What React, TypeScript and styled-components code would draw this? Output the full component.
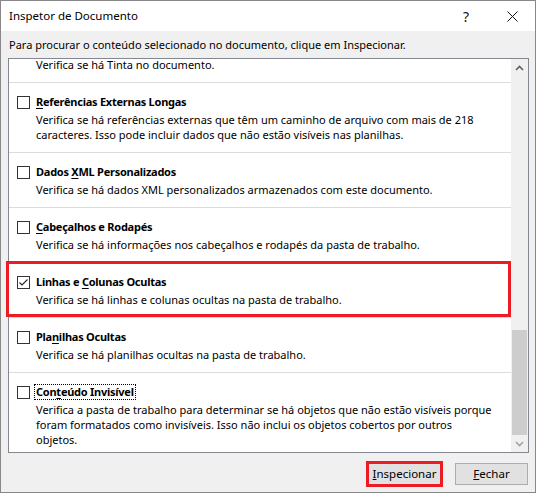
import React from 'react';
import styled, { createGlobalStyle } from 'styled-components';

const GlobalStyle = createGlobalStyle`
  html, body { margin: 0; padding: 0; background: #ffffff; }
  body {
    font-family: "Noto Sans", sans-serif;
    font-size: 11px;
    color: #000;
  }
  * { box-sizing: border-box; }
`;

const ANNOT = '#ed1c24';

const Window = styled.div`
  width: 536px;
  height: 493px;
  border: 1px solid #888888;
  background: #f0f0f0;
  display: flex;
  flex-direction: column;
`;

const TitleBar = styled.div`
  height: 30px;
  background: #ffffff;
  display: flex;
  align-items: center;
  padding-left: 8px;
  flex-shrink: 0;
`;

const Title = styled.div`
  flex: 1;
  line-height: 16px;
  font-size: 11.5px;
`;

const CaptionButton = styled.div`
  width: 46px;
  height: 30px;
  display: flex;
  align-items: center;
  justify-content: center;
  font-size: 14px;
  color: #111;
`;

const Body = styled.div`
  flex: 1;
  display: flex;
  flex-direction: column;
  padding: 6px 6px 0 7px;
`;

const Instruction = styled.div`
  line-height: 16px;
  padding-left: 1px;
  white-space: nowrap;
`;

const ListFrame = styled.div`
  margin-top: 5px;
  height: 395px;
  border: 1px solid #828790;
  background: #ffffff;
  display: flex;
  flex-shrink: 0;
`;

const Viewport = styled.div`
  flex: 1;
  min-width: 0;
  display: flex;
  flex-direction: column;
  overflow-x: visible;
  overflow-y: clip;
`;

const Item = styled.div<{ $first?: boolean; $marked?: boolean }>`
  position: relative;
  flex-shrink: 0;
  padding: 11px 0 10px 8px;
  border-top: ${p => (p.$first ? 'none' : '1px solid #dcdcdc')};
  margin-top: ${p => (p.$first ? '-31px' : '0')};
  ${p =>
    p.$marked &&
    `
    &::after {
      content: '';
      position: absolute;
      top: -2px;
      left: -3px;
      right: 0;
      bottom: 0;
      border: 3px solid ${ANNOT};
      pointer-events: none;
    }
  `}
`;

const Head = styled.div`
  display: flex;
  align-items: center;
  gap: 6px;
  height: 16px;
`;

const Box = styled.div`
  width: 13px;
  height: 13px;
  border: 1px solid #333333;
  background: #ffffff;
  display: flex;
  align-items: center;
  justify-content: center;
  flex-shrink: 0;
`;

const ItemTitle = styled.span<{ $focus?: boolean }>`
  font-weight: 700;
  line-height: 14px;
  letter-spacing: -0.25px;
  white-space: nowrap;
  outline: ${p => (p.$focus ? '1px dotted #000' : 'none')};
  padding: 0 1px;
  margin-left: -1px;
  u { text-underline-offset: 2px; }
`;

const Desc = styled.div`
  margin-top: 2px;
  padding-left: 19px;
  line-height: 15px;
  white-space: nowrap;
`;

const ScrollBar = styled.div`
  width: 17px;
  background: #f0f0f0;
  display: flex;
  flex-direction: column;
  flex-shrink: 0;
`;

const ArrowBtn = styled.div`
  height: 17px;
  display: flex;
  align-items: center;
  justify-content: center;
  flex-shrink: 0;
`;

const Track = styled.div`
  flex: 1;
  display: flex;
  flex-direction: column;
  justify-content: flex-end;
`;

const Thumb = styled.div`
  height: 105px;
  margin: 0 1px;
  background: #cdcdcd;
`;

const Footer = styled.div`
  margin-top: 10px;
  display: flex;
  justify-content: flex-end;
  gap: 14px;
  padding-right: 1px;
`;

const Button = styled.button<{ $marked?: boolean }>`
  width: 73px;
  height: 22px;
  border: 1px solid ${p => (p.$marked ? '#0078d7' : '#adadad')};
  background: #e1e1e1;
  font-family: inherit;
  font-size: 11.5px;
  color: #000;
  padding: 0;
  line-height: 18px;
  outline: ${p => (p.$marked ? `3px solid ${ANNOT}` : 'none')};
  outline-offset: -1px;
`;

const Check = () => (
  <svg width="11" height="11" viewBox="0 0 11 11">
    <polyline points="1.5,5.5 4,8 9.5,2.5" fill="none" stroke="#222" strokeWidth="1.1" />
  </svg>
);

const Chevron = ({ up, color }: { up?: boolean; color: string }) => (
  <svg width="9" height="6" viewBox="0 0 9 6">
    <polyline
      points={up ? '1,5 4.5,1.5 8,5' : '1,1 4.5,4.5 8,1'}
      fill="none"
      stroke={color}
      strokeWidth="1.6"
    />
  </svg>
);

type Entry = {
  title: React.ReactNode;
  desc: string[];
  checked?: boolean;
  marked?: boolean;
  focus?: boolean;
};

const entries: Entry[] = [
  { title: <>Tinta</>, desc: ['Verifica se há Tinta no documento.'] },
  {
    title: <><u>R</u>eferências Externas Longas</>,
    desc: [
      'Verifica se há referências externas que têm um caminho de arquivo com mais de 218',
      'caracteres. Isso pode incluir dados que não estão visíveis nas planilhas.',
    ],
  },
  {
    title: <>Dados <u>X</u>ML Personalizados</>,
    desc: ['Verifica se há dados XML personalizados armazenados com este documento.'],
  },
  {
    title: <><u>C</u>abeçalhos e Rodapés</>,
    desc: ['Verifica se há informações nos cabeçalhos e rodapés da pasta de trabalho.'],
  },
  {
    title: <>Linhas e <u>C</u>olunas Ocultas</>,
    desc: ['Verifica se há linhas e colunas ocultas na pasta de trabalho.'],
    checked: true,
    marked: true,
  },
  {
    title: <>Pla<u>n</u>ilhas Ocultas</>,
    desc: ['Verifica se há planilhas ocultas na pasta de trabalho.'],
  },
  {
    title: <>Con<u>t</u>eúdo Invisível</>,
    desc: [
      'Verifica a pasta de trabalho para determinar se há objetos que não estão visíveis porque',
      'foram formatados como invisíveis. Isso não inclui os objetos cobertos por outros',
      'objetos.',
    ],
    focus: true,
  },
];

export default function App() {
  return (
    <>
      <GlobalStyle />
      <Window>
        <TitleBar>
          <Title>Inspetor de Documento</Title>
          <CaptionButton>?</CaptionButton>
          <CaptionButton>
            <svg width="11" height="11" viewBox="0 0 11 11">
              <path d="M0.5 0.5 L10.5 10.5 M10.5 0.5 L0.5 10.5" stroke="#111" strokeWidth="1" />
            </svg>
          </CaptionButton>
        </TitleBar>
        <Body>
          <Instruction>
            Para procurar o conteúdo selecionado no documento, clique em Inspecionar.
          </Instruction>
          <ListFrame>
            <Viewport>
              {entries.map((e, i) => (
                <Item key={i} $first={i === 0} $marked={e.marked}>
                  <Head>
                    <Box>{e.checked && <Check />}</Box>
                    <ItemTitle $focus={e.focus}>{e.title}</ItemTitle>
                  </Head>
                  <Desc>
                    {e.desc.map((line, j) => (
                      <div key={j}>{line}</div>
                    ))}
                  </Desc>
                </Item>
              ))}
            </Viewport>
            <ScrollBar>
              <ArrowBtn>
                <Chevron up color="#606060" />
              </ArrowBtn>
              <Track>
                <Thumb />
              </Track>
              <ArrowBtn>
                <Chevron color="#a3a3a3" />
              </ArrowBtn>
            </ScrollBar>
          </ListFrame>
          <Footer>
            <Button $marked>
              <u>I</u>nspecionar
            </Button>
            <Button>
              <u>F</u>echar
            </Button>
          </Footer>
        </Body>
      </Window>
    </>
  );
}
